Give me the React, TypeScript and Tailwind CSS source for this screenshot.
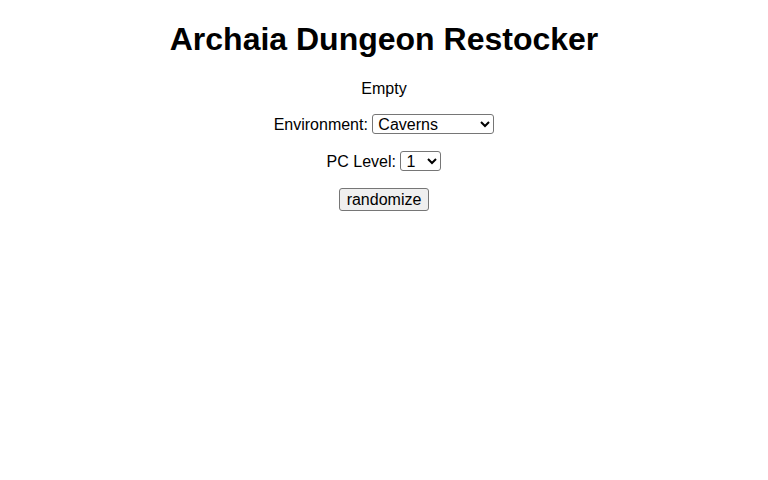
import React from "react";

export default function App() {
  return (
    <div className="min-h-screen bg-white text-black text-center font-['Liberation_Sans',Arial,sans-serif] text-[16px]">
      <h1 className="text-[32px] font-bold pt-[21px] mb-[22px] leading-[37px]">Archaia Dungeon Restocker</h1>
      <p className="my-4 leading-[18px]">Empty</p>
      <p className="my-4 leading-[21px]">
        Environment:{" "}
        <select defaultValue="Caverns" className="w-[122px] h-[20px] border border-[#767676] rounded-[3px] bg-white px-[1px] text-[16px] align-baseline">
          <option>Caverns</option>
          <option>Ruins</option>
          <option>Crypts</option>
        </select>
      </p>
      <p className="my-4 leading-[21px]">
        PC Level:{" "}
        <select defaultValue="1" className="w-[41px] h-[20px] border border-[#767676] rounded-[3px] bg-white px-[1px] text-[16px] align-baseline">
          <option>1</option>
          <option>2</option>
          <option>3</option>
        </select>
      </p>
      <p className="my-4">
        <button className="h-[23px] px-[7px] border border-[#767676] rounded-[3px] bg-[#efefef] text-[16px] leading-[19px]">randomize</button>
      </p>
    </div>
  );
}
